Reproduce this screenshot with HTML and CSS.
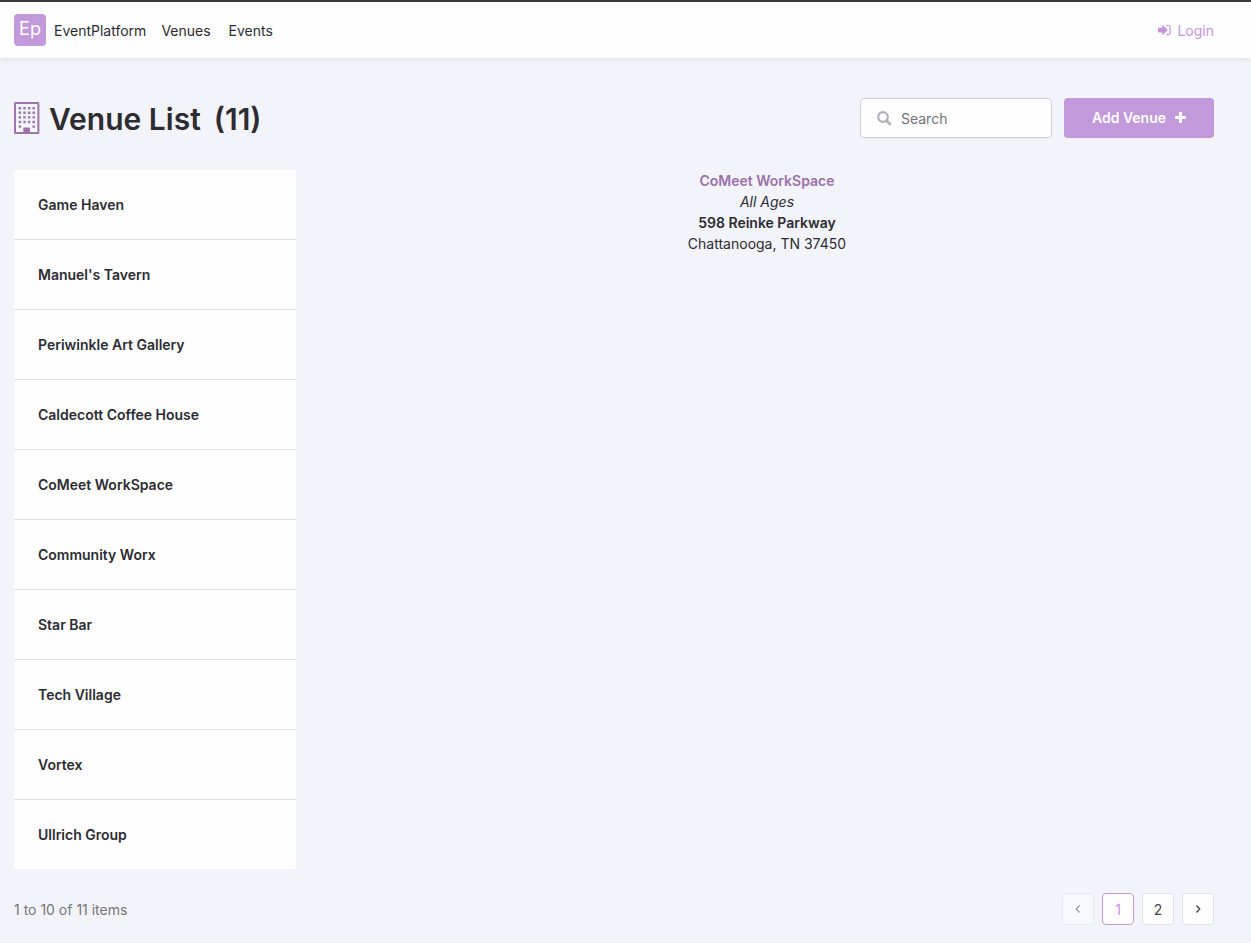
FILE: index.html
```html
<!DOCTYPE html>
<html lang="en">
<head>
<meta charset="utf-8">
<title>Venue List</title>
<meta name="viewport" content="width=device-width, initial-scale=1">
<link rel="stylesheet" href="styles.css">
</head>
<body>
<header class="navbar">
  <nav class="nav-links">
    <a class="brand" href="#"><span class="logo">Ep</span><span>EventPlatform</span></a>
    <a class="nav-link" href="#">Venues</a>
    <a class="nav-link" href="#">Events</a>
  </nav>
  <a class="login" href="#">
    <svg width="13" height="12" viewBox="0 0 13 12" aria-hidden="true"><path fill="currentColor" d="M0 4.4Q0 3.8 .6 3.8H4.2V1.7Q4.2 .7 5 1.3L9.4 5.5Q9.9 6.1 9.4 6.6L5 10.8Q4.2 11.4 4.2 10.4V8.4H.6Q0 8.4 0 7.8Z"/><path fill="none" stroke="currentColor" stroke-width="1.2" stroke-linecap="round" d="M8.6 1.5H10.2Q12.1 1.5 12.1 3.4V8.8Q12.1 10.7 10.2 10.7H8.6"/></svg>
    <span>Login</span>
  </a>
</header>
<main class="page">
  <div class="toolbar">
    <h1 class="title">
      <svg width="26" height="34" viewBox="0 0 26 34" aria-hidden="true"><rect x="1" y="1" width="23.4" height="30" rx=".5" fill="none" stroke="currentColor" stroke-width="2"/><g fill="none" stroke="currentColor" stroke-width="2.4" stroke-dasharray="2.4 2.2"><path d="M4.7 6.2H21.1M4.7 10.8H21.1M4.7 15.4H21.1M4.7 20H21.1"/><path d="M4.7 24.6H7.1M18.5 24.6H20.9"/></g><path fill="currentColor" d="M9.3 31V26Q9.3 25.5 9.8 25.5H15.5Q16 25.5 16 26V31Z"/></svg>
      <span>Venue List</span><span class="count">(11)</span>
    </h1>
    <form class="actions">
      <label class="search">
        <svg width="15" height="15" viewBox="0 0 15 15" fill="none" stroke="currentColor" stroke-width="2.2" aria-hidden="true"><circle cx="6" cy="6" r="4.8"/><path stroke-linecap="round" stroke-width="2.6" d="M9.8 9.8L13 13"/></svg>
        <input type="search" placeholder="Search" aria-label="Search">
      </label>
      <button class="add" type="button"><span>Add Venue</span><svg width="11" height="11" viewBox="0 0 11 11" aria-hidden="true"><path d="M5.5 0V11M0 5.5H11" stroke="currentColor" stroke-width="2.8"/></svg></button>
    </form>
  </div>
  <div class="content">
    <ul class="venues">
      <li><a href="#">Game Haven</a></li>
      <li><a href="#">Manuel's Tavern</a></li>
      <li><a href="#">Periwinkle Art Gallery</a></li>
      <li><a href="#">Caldecott Coffee House</a></li>
      <li><a href="#">CoMeet WorkSpace</a></li>
      <li><a href="#">Community Worx</a></li>
      <li><a href="#">Star Bar</a></li>
      <li><a href="#">Tech Village</a></li>
      <li><a href="#">Vortex</a></li>
      <li><a href="#">Ullrich Group</a></li>
    </ul>
    <section class="detail">
      <a class="detail-name" href="#">CoMeet WorkSpace</a>
      <em>All Ages</em>
      <strong>598 Reinke Parkway</strong>
      <span>Chattanooga, TN 37450</span>
    </section>
  </div>
  <footer class="footer">
    <span>1 to 10 of 11 items</span>
    <nav class="pages" aria-label="Pagination">
      <button class="page-btn" type="button" disabled aria-label="Previous"><svg width="6" height="8" viewBox="0 0 6 8" aria-hidden="true"><path d="M4.6 .5L1.2 4L4.6 7.5"/></svg></button>
      <button class="page-btn current" type="button" aria-current="page">1</button>
      <button class="page-btn" type="button">2</button>
      <button class="page-btn" type="button" aria-label="Next"><svg width="6" height="8" viewBox="0 0 6 8" aria-hidden="true"><path d="M1.4 .5L4.8 4L1.4 7.5"/></svg></button>
    </nav>
  </footer>
</main>
</body>
</html>
```
FILE: styles.css
```css
* {
  box-sizing: border-box;
}

body {
  margin: 0;
  background: #f3f4fa;
  color: #2c2c32;
  font: 14px/21px Inter, "Liberation Sans", sans-serif;
}

a {
  color: inherit;
  text-decoration: none;
}

svg {
  flex: none;
}

.navbar {
  display: flex;
  align-items: center;
  justify-content: space-between;
  padding: 12px 37px 12px 14px;
  background: #fefefe;
  border-top: 2px solid #3a393b;
  box-shadow: 0 1px 6px rgba(40, 41, 61, 0.11);
}

.nav-links {
  display: flex;
  align-items: center;
  gap: 18px;
}

.brand {
  display: flex;
  align-items: center;
  gap: 8px;
  margin-right: -3px;
}

.logo {
  width: 32px;
  height: 32px;
  border-radius: 4px;
  background: #c299da;
  color: #fff;
  font-size: 18px;
  line-height: 30px;
  text-align: center;
}

.login {
  display: flex;
  align-items: center;
  gap: 6px;
  color: #c795dd;
}

.page {
  padding: 40px 37px 18px 14px;
}

.toolbar {
  display: flex;
  align-items: center;
  justify-content: space-between;
  margin-bottom: 32px;
}

.title {
  display: flex;
  align-items: center;
  gap: 9px;
  margin: 0;
  padding-top: 2px;
  font-size: 30px;
  line-height: 38px;
  font-weight: 600;
}

.title svg {
  color: #9c75aa;
}

.count {
  margin-left: 4px;
}

.actions {
  display: flex;
  gap: 12px;
}

.search {
  display: flex;
  align-items: center;
  gap: 9px;
  width: 192px;
  height: 40px;
  padding: 0 16px;
  background: #fefefe;
  border: 1px solid #cfcfdb;
  border-radius: 4px;
  color: #adb0b8;
}

.search input {
  flex: 1;
  min-width: 0;
  padding: 1px 0 0;
  border: 0;
  outline: 0;
  background: none;
  color: #2c2c32;
  font: inherit;
}

.search input::placeholder {
  color: #737378;
  opacity: 1;
}

.add {
  display: flex;
  align-items: center;
  gap: 9px;
  height: 40px;
  padding: 0 28px 1px;
  border: 0;
  border-radius: 4px;
  background: #c299da;
  color: #fff;
  font: inherit;
  font-weight: 600;
}

.content {
  display: grid;
  grid-template-columns: minmax(200px, 282px) 1fr;
  gap: 24px;
}

.venues {
  margin: 0;
  padding: 0;
  list-style: none;
  background: #fefefe;
}

.venues li + li {
  border-top: 1px solid #dedee5;
}

.venues a {
  display: block;
  padding: 24px;
  font-weight: 600;
}

.detail {
  display: flex;
  flex-direction: column;
  align-items: center;
}

.detail strong {
  font-weight: 600;
}

.detail-name {
  color: #9b71a9;
  font-weight: 600;
}

.footer {
  display: flex;
  align-items: center;
  justify-content: space-between;
  margin-top: 24px;
  color: #75757b;
}

.pages {
  display: flex;
  gap: 8px;
}

.page-btn {
  display: grid;
  place-items: center;
  width: 32px;
  height: 32px;
  padding: 0;
  border: 1px solid #dfdfe8;
  border-radius: 4px;
  background: #fefefe;
  color: #46464c;
  font: inherit;
}

.page-btn svg {
  fill: none;
  stroke: currentColor;
  stroke-width: 1.3;
}

.page-btn.current {
  border-color: #c299da;
  color: #c795dd;
}

.page-btn:disabled {
  opacity: 0.5;
}
```
